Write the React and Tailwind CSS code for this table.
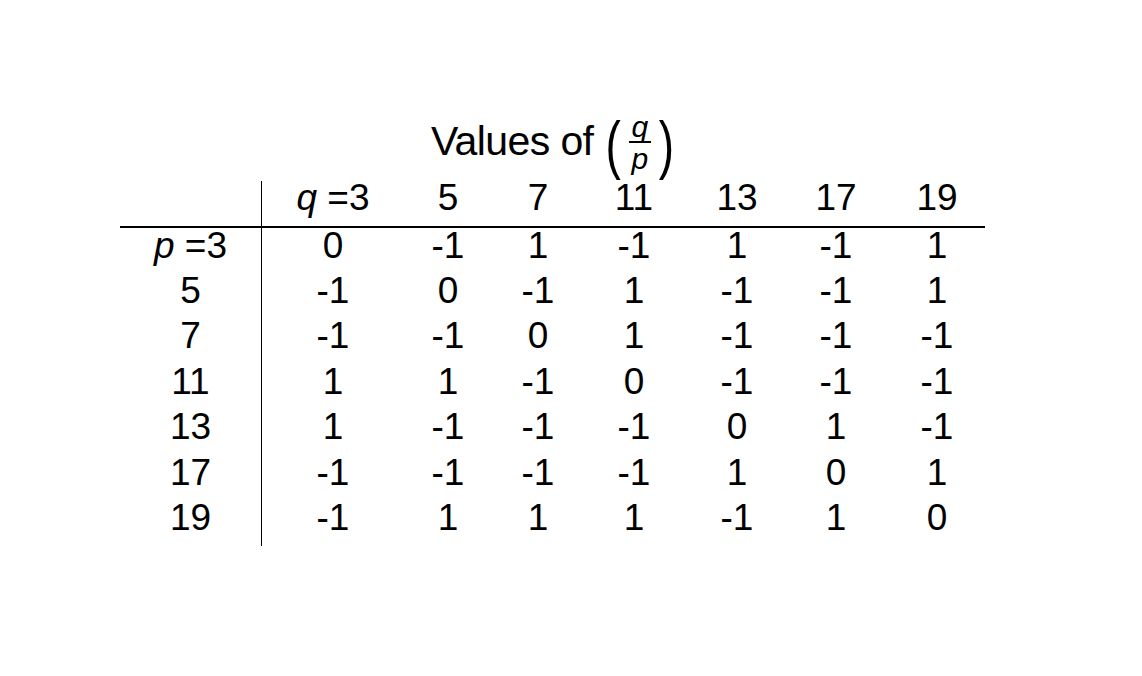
import React from "react";

const rows = [
  ["p", [0, -1, 1, -1, 1, -1, 1]],
  ["5", [-1, 0, -1, 1, -1, -1, 1]],
  ["7", [-1, -1, 0, 1, -1, -1, -1]],
  ["11", [1, 1, -1, 0, -1, -1, -1]],
  ["13", [1, -1, -1, -1, 0, 1, -1]],
  ["17", [-1, -1, -1, -1, 1, 0, 1]],
  ["19", [-1, 1, 1, 1, -1, 1, 0]],
];

const heads = ["q", "5", "7", "11", "13", "17", "19"];

function Label({ v }) {
  if (v === "p")
    return (
      <span>
        <span className="italic">p</span> =3
      </span>
    );
  if (v === "q")
    return (
      <span>
        <span className="italic">q</span> =3
      </span>
    );
  return <span>{v}</span>;
}

export default function App() {
  return (
    <div
      className="w-[1142px] h-[676px] bg-white text-black"
      style={{ fontFamily: '"Liberation Sans", Arial, sans-serif' }}
    >
      <div className="pt-[113px] pl-[120px]">
        <div className="w-[865px] flex justify-center">
          <div className="flex items-center h-[64px]">
            <span className="text-[41px] leading-none tracking-[-0.6px] mb-[8px]">
              Values of
            </span>
            <span className="ml-[12px] text-[46px] leading-none scale-y-[1.4] inline-block">
              (
            </span>
            <span className="flex flex-col items-center mx-[8px] mb-[2px]">
              <span className="italic text-[30px] leading-[22px]">q</span>
              <span className="w-[22px] h-[1.5px] bg-black my-[3px]"></span>
              <span className="italic text-[30px] leading-[26px]">p</span>
            </span>
            <span className="text-[46px] leading-none scale-y-[1.4] inline-block">
              )
            </span>
          </div>
        </div>
      </div>
      <div className="pl-[120px] pt-[4px] text-[37px]">
        <div className="grid grid-cols-[142px_142px_88px_92px_100px_106px_92px_110px]">
          <div className="border-r-[1.5px] border-black h-[45px]"></div>
          {heads.map((h, i) => (
            <div key={i} className="text-center leading-[34.3px] pb-[10.7px]">
              <Label v={h} />
            </div>
          ))}
        </div>
        <div className="w-[865px] h-[1.5px] bg-black"></div>
        <div className="grid grid-cols-[142px_142px_88px_92px_100px_106px_92px_110px]">
          {rows.map(([lab, vals], r) => (
            <React.Fragment key={r}>
              <div className="text-center leading-[36.3px] pb-[9.2px] border-r-[1.5px] border-black">
                <Label v={lab} />
              </div>
              {vals.map((v, c) => (
                <div key={c} className="text-center leading-[36.3px] pb-[9.2px]">
                  {String(v)}
                </div>
              ))}
            </React.Fragment>
          ))}
        </div>
      </div>
    </div>
  );
}
